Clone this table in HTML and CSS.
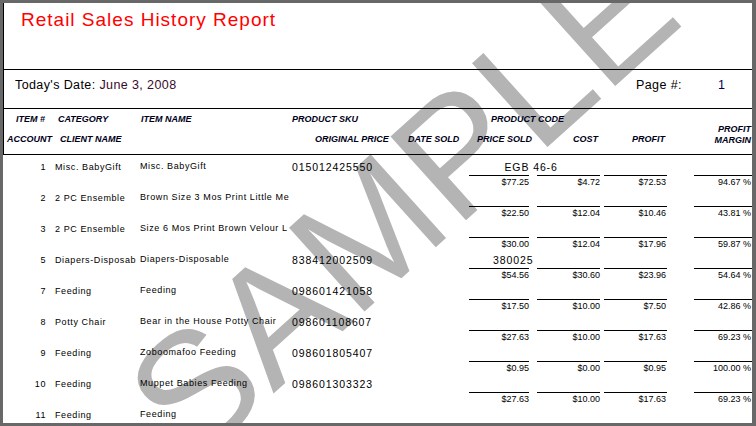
FILE: index.html
```html
<!DOCTYPE html>
<html>
<head>
<meta charset="utf-8">
<title>Retail Sales History Report</title>
<link rel="stylesheet" href="styles.css">
</head>
<body>
<div class="page">
  <svg class="watermark" width="749" height="420" viewBox="0 0 749 420">
    <text x="189" y="464" transform="rotate(-42 189 464)" class="wm-text">SAMPLE</text>
  </svg>
  <div class="report">
    <header class="title-band">
      <h1 class="title">Retail Sales History Report</h1>
    </header>
    <div class="date-band">
      <div class="date"><span class="date-label">Today's Date:</span> <span class="date-value">June 3, 2008</span></div>
      <div class="page-label">Page #:</div>
      <div class="page-num">1</div>
    </div>
    <div class="col-head">
      <div class="col-head-main">
        <div class="hrow hrow1">
          <span class="h h-item">ITEM #</span>
          <span class="h h-cat">CATEGORY</span>
          <span class="h h-name">ITEM NAME</span>
          <span class="h h-sku">PRODUCT SKU</span>
          <span class="h h-code">PRODUCT CODE</span>
        </div>
        <div class="hrow hrow2">
          <span class="h h-acct">ACCOUNT</span>
          <span class="h h-client">CLIENT NAME</span>
          <span class="h h-orig">ORIGINAL PRICE</span>
          <span class="h h-date">DATE SOLD</span>
          <span class="h h-sold">PRICE SOLD</span>
          <span class="h h-cost">COST</span>
          <span class="h h-profit">PROFIT</span>
        </div>
      </div>
      <div class="h h-margin">PROFIT<br>MARGIN</div>
    </div>

    <div class="records">
      <div class="rec">
        <div class="row-a"><span class="c-no">1</span><span class="c-cat">Misc. BabyGift</span><span class="c-name">Misc. BabyGift</span><span class="c-sku">015012425550</span><span class="c-code">   EGB 46-6</span></div>
        <div class="row-b"><span class="v v-sold">$77.25</span><span class="v v-cost">$4.72</span><span class="v v-profit">$72.53</span><span class="v v-margin">94.67 %</span></div>
      </div>
      <div class="rec">
        <div class="row-a"><span class="c-no">2</span><span class="c-cat">2 PC Ensemble</span><span class="c-name">Brown Size 3 Mos Print Little Me</span><span class="c-sku"></span><span class="c-code"></span></div>
        <div class="row-b"><span class="v v-sold">$22.50</span><span class="v v-cost">$12.04</span><span class="v v-profit">$10.46</span><span class="v v-margin">43.81 %</span></div>
      </div>
      <div class="rec">
        <div class="row-a"><span class="c-no">3</span><span class="c-cat">2 PC Ensemble</span><span class="c-name">Size 6 Mos Print Brown Velour L</span><span class="c-sku"></span><span class="c-code"></span></div>
        <div class="row-b"><span class="v v-sold">$30.00</span><span class="v v-cost">$12.04</span><span class="v v-profit">$17.96</span><span class="v v-margin">59.87 %</span></div>
      </div>
      <div class="rec">
        <div class="row-a"><span class="c-no">5</span><span class="c-cat">Diapers-Disposab</span><span class="c-name">Diapers-Disposable</span><span class="c-sku">838412002509</span><span class="c-code">380025</span></div>
        <div class="row-b"><span class="v v-sold">$54.56</span><span class="v v-cost">$30.60</span><span class="v v-profit">$23.96</span><span class="v v-margin">54.64 %</span></div>
      </div>
      <div class="rec">
        <div class="row-a"><span class="c-no">7</span><span class="c-cat">Feeding</span><span class="c-name">Feeding</span><span class="c-sku">098601421058</span><span class="c-code"></span></div>
        <div class="row-b"><span class="v v-sold">$17.50</span><span class="v v-cost">$10.00</span><span class="v v-profit">$7.50</span><span class="v v-margin">42.86 %</span></div>
      </div>
      <div class="rec">
        <div class="row-a"><span class="c-no">8</span><span class="c-cat">Potty Chair</span><span class="c-name">Bear in the House Potty Chair</span><span class="c-sku">098601108607</span><span class="c-code"></span></div>
        <div class="row-b"><span class="v v-sold">$27.63</span><span class="v v-cost">$10.00</span><span class="v v-profit">$17.63</span><span class="v v-margin">69.23 %</span></div>
      </div>
      <div class="rec">
        <div class="row-a"><span class="c-no">9</span><span class="c-cat">Feeding</span><span class="c-name">Zoboomafoo Feeding</span><span class="c-sku">098601805407</span><span class="c-code"></span></div>
        <div class="row-b"><span class="v v-sold">$0.95</span><span class="v v-cost">$0.00</span><span class="v v-profit">$0.95</span><span class="v v-margin">100.00 %</span></div>
      </div>
      <div class="rec">
        <div class="row-a"><span class="c-no">10</span><span class="c-cat">Feeding</span><span class="c-name">Muppet Babies Feeding</span><span class="c-sku">098601303323</span><span class="c-code"></span></div>
        <div class="row-b"><span class="v v-sold">$27.63</span><span class="v v-cost">$10.00</span><span class="v v-profit">$17.63</span><span class="v v-margin">69.23 %</span></div>
      </div>
      <div class="rec">
        <div class="row-a"><span class="c-no">11</span><span class="c-cat">Feeding</span><span class="c-name">Feeding</span><span class="c-sku"></span><span class="c-code"></span></div>
      </div>
    </div>
  </div>
</div>
</body>
</html>
```

FILE: styles.css
```css
html, body {
  margin: 0;
  padding: 0;
}

body {
  background: #686868;
  font-family: "Liberation Sans", Arial, sans-serif;
  color: #000;
  overflow: hidden;
  height: 426px;
}

.page {
  position: relative;
  margin: 3px 4px 0 3px;
  width: 749px;
  height: 420px;
  background: #fff;
  overflow: hidden;
}

.watermark {
  position: absolute;
  left: 0;
  top: 0;
  z-index: 0;
}

.wm-text {
  font-family: "Liberation Sans", Arial, sans-serif;
  font-size: 164px;
  fill: #b4b4b4;
}

.report {
  position: relative;
  z-index: 1;
}

/* Title band */
.title-band {
  border-left: 1px solid #000;
  border-bottom: 1px solid #000;
  padding: 6px 0 0 17px;
  height: 60px;
}

.title {
  margin: 0;
  font-weight: normal;
  font-size: 19px;
  line-height: 22px;
  letter-spacing: 1px;
  color: #ff0000;
}

/* Date band */
.date-band {
  display: grid;
  grid-template-columns: 1fr 82px 34px;
  height: 30px;
  padding-top: 8px;
  border-left: 1px solid #000;
  border-bottom: 1px solid #000;
  font-size: 12.5px;
  line-height: 15px;
  letter-spacing: 0.4px;
}

.date {
  padding-left: 11px;
}

.date-value {
  color: #3a0a2a;
}

.page-num {
  color: #000050;
}

/* Column header band */
.col-head {
  display: grid;
  grid-template-columns: 1fr 60px;
  height: 45px;
  border-left: 1px solid #000;
  border-bottom: 1px solid #000;
  color: #000018;
}

.h {
  font-size: 9px;
  font-weight: bold;
  font-style: italic;
  white-space: nowrap;
  line-height: 14px;
}

.hrow {
  display: flex;
}

.hrow .h {
  flex: none;
  display: block;
}

.hrow1 {
  height: 14px;
  padding: 3px 0 0 12px;
}

.hrow2 {
  padding: 6px 0 0 3px;
}

.h-item { width: 42px; }
.h-cat { width: 83px; }
.h-name { width: 151px; }
.h-sku { width: 199px; }

.h-acct { width: 53px; }
.h-client { width: 255px; }
.h-orig { width: 93px; }
.h-date { width: 69px; }
.h-sold { width: 96px; }
.h-cost { width: 59px; }

.h-margin {
  padding: 15px 1px 0 0;
  line-height: 11px;
  text-align: right;
}

/* Records */
.records {
  padding-top: 3px;
}

.rec {
  height: 31px;
}

.row-a {
  display: grid;
  grid-template-columns: 49px 85px 152px 204px 1fr;
  height: 17px;
}

.row-a > span {
  display: block;
  white-space: pre;
  overflow: hidden;
  line-height: 16px;
  padding-top: 1px;
  font-size: 9px;
  letter-spacing: 0.6px;
}

.c-no {
  text-align: right;
  padding-right: 6px;
}

.c-cat,
.c-name,
.c-sku {
  padding-left: 3px;
}

.row-a > .c-name {
  padding-top: 0;
}

.row-a > .c-sku,
.row-a > .c-code {
  font-size: 10.5px;
  letter-spacing: 0.9px;
}

.row-b {
  display: flex;
  padding-left: 466px;
  height: 14px;
}

.v {
  display: block;
  flex: none;
  border-top: 1px solid #000;
  font-size: 9px;
  line-height: 13px;
  text-align: right;
}

.v-sold { width: 60px; }
.v-cost { width: 63px; margin-left: 8px; }
.v-profit { width: 62px; margin-left: 4px; padding-right: 1px; }
.v-margin { width: 57px; margin-left: 27px; padding-right: 1px; }
```
